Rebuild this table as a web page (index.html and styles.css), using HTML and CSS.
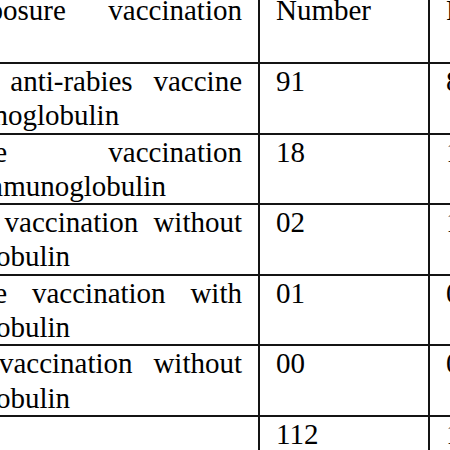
FILE: index.html
```html
<!DOCTYPE html>
<html lang="en">
<head>
<meta charset="utf-8">
<title>Post-exposure vaccination table</title>
<link rel="stylesheet" href="styles.css">
</head>
<body>
<div class="sheet">
  <div class="cell desc head"><span class="ln">Post-exposure vaccination</span><span class="ln end">status</span></div>
  <div class="cell">Number</div>
  <div class="cell">Percentage</div>

  <div class="cell desc"><span class="ln">Complete anti-rabies vaccine</span><span class="ln end">and immunoglobulin</span></div>
  <div class="cell">91</div>
  <div class="cell">81.25</div>

  <div class="cell desc"><span class="ln">Incomplete vaccination</span><span class="ln end">without immunoglobulin</span></div>
  <div class="cell">18</div>
  <div class="cell">16.07</div>

  <div class="cell desc"><span class="ln">Complete vaccination without</span><span class="ln end">immunoglobulin</span></div>
  <div class="cell">02</div>
  <div class="cell">1.79</div>

  <div class="cell desc"><span class="ln">Incomplete vaccination with</span><span class="ln end">immunoglobulin</span></div>
  <div class="cell">01</div>
  <div class="cell">0.89</div>

  <div class="cell desc"><span class="ln">Irregular vaccination without</span><span class="ln end">immunoglobulin</span></div>
  <div class="cell">00</div>
  <div class="cell">0.00</div>

  <div class="cell desc"></div>
  <div class="cell">112</div>
  <div class="cell">100</div>
</div>
</body>
</html>
```

FILE: styles.css
```css
html, body {
  margin: 0;
  padding: 0;
  overflow: hidden;
  background: #ffffff;
}

body {
  width: 450px;
  height: 450px;
}

.sheet {
  display: grid;
  grid-template-columns: 397.3px 168px 160px;
  gap: 2px;
  padding: 2px;
  width: max-content;
  margin: -8.6px 0 0 -141.3px;
  background: #141414;
  font-family: "Liberation Serif", "Times New Roman", serif;
  font-size: 29px;
  line-height: 34.3px;
  color: #000000;
}

.cell {
  background: #ffffff;
  padding: 0 16px;
  min-height: 68.6px;
}

.desc .ln {
  display: block;
  text-align: justify;
  text-align-last: justify;
}

.desc .ln.end {
  text-align-last: left;
}

.head .ln:first-child {
  text-indent: 24.8px;
}
```
